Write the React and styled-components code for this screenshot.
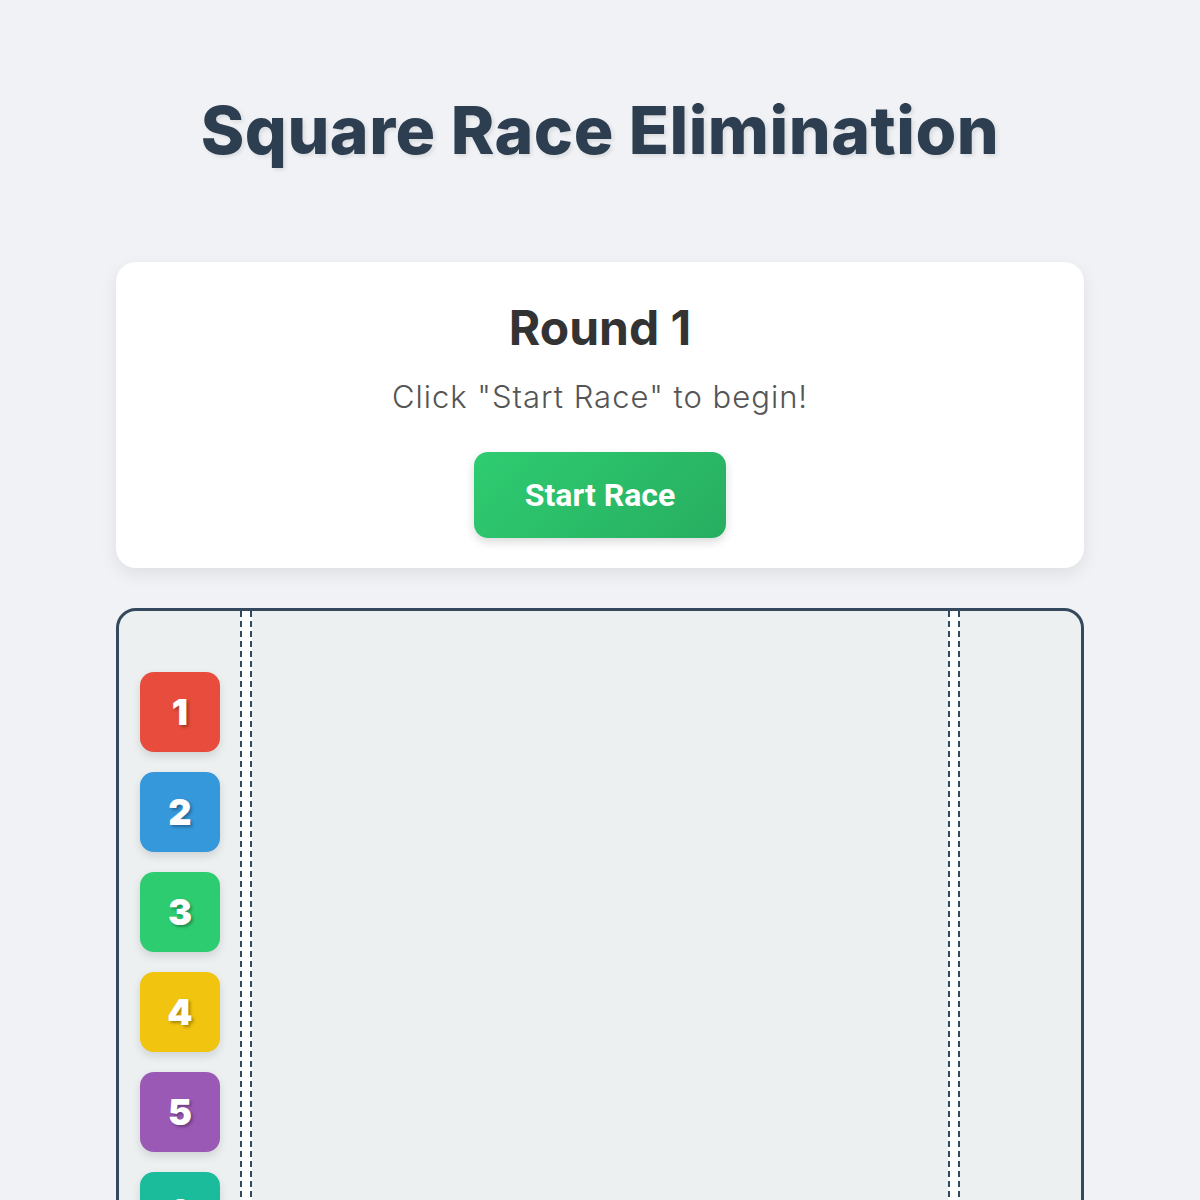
import React from "react";
import styled, { createGlobalStyle } from "styled-components";

const GlobalStyle = createGlobalStyle`
  body {
    margin: 0;
    background-color: #f0f2f5;
    font-family: "Inter", "Noto Sans", sans-serif;
  }
`;

const Page = styled.div`
  width: 968px;
  margin: 0 auto;
  padding-top: 91px;
`;

const Title = styled.h1`
  margin: 0 0 92px 0;
  text-align: center;
  font-size: 66px;
  font-weight: 800;
  line-height: 1.2;
  letter-spacing: 0.5px;
  color: #2c3e50;
  text-shadow: 2px 2px 4px rgba(0, 0, 0, 0.1);
`;

const Panel = styled.div`
  background: #ffffff;
  border-radius: 20px;
  box-shadow: 0 6px 18px rgba(0, 0, 0, 0.08);
  padding: 37px 20px 30px;

  display: flex;
  flex-direction: column;
  align-items: center;
`;

const RoundLabel = styled.h2`
  margin: 0;
  font-size: 48px;
  font-weight: 700;
  line-height: 1.2;
  color: #333333;
`;

const Status = styled.p`
  margin: 20px 0 35px 0;
  font-size: 31px;
  font-weight: 300;
  line-height: 1.3;
  letter-spacing: 1px;
  color: #555555;
`;

const StartButton = styled.button`
  width: 252px;
  height: 86px;
  border: none;
  border-radius: 14px;
  background: linear-gradient(135deg, #2ecc71, #27ae60);
  box-shadow: 0 4px 10px rgba(0, 0, 0, 0.15);
  color: #ffffff;
  font-family: "Roboto", sans-serif;
  font-size: 32px;
  font-weight: 700;
  cursor: pointer;
`;

const Track = styled.div`
  position: relative;
  margin-top: 40px;
  height: 900px;
  background: #ecf0f1;
  border: 3px solid #34495e;
  border-radius: 20px;
  padding: 61px 21px;
`;

// start / finish markers drawn over the lanes
const Line = styled.div`
  position: absolute;
  top: 0;
  bottom: 0;
  width: 12px;
  ${(p) => (p.finish ? "right: 121px;" : "left: 121px;")}
  background:
    repeating-linear-gradient(to bottom, #34495e 0 6px, transparent 6px 10px) left / 2px 100% no-repeat,
    repeating-linear-gradient(to bottom, #34495e 0 6px, transparent 6px 10px) right / 2px 100% no-repeat,
    rgba(255, 255, 255, 0.9);
`;

const Lanes = styled.div`
  display: flex;
  flex-direction: column;
  gap: 20px;
`;

const Racer = styled.div`
  width: 80px;
  height: 80px;
  border-radius: 14px;
  background: ${(p) => p.color};
  box-shadow: 0 4px 8px rgba(0, 0, 0, 0.12);

  display: flex;
  align-items: center;
  justify-content: center;

  color: #ffffff;
  font-size: 36px;
  font-weight: 900;
  text-shadow: 2px 2px 3px rgba(0, 0, 0, 0.3);
`;

const racers = [
  { id: 1, color: "#e74c3c" },
  { id: 2, color: "#3498db" },
  { id: 3, color: "#2ecc71" },
  { id: 4, color: "#f1c40f" },
  { id: 5, color: "#9b59b6" },
  { id: 6, color: "#1abc9c" },
  { id: 7, color: "#e67e22" },
  { id: 8, color: "#34495e" },
];

const App = () => {
  return (
    <>
      <GlobalStyle />
      <Page>
        <Title>Square Race Elimination</Title>

        <Panel>
          <RoundLabel>Round 1</RoundLabel>
          <Status>Click "Start Race" to begin!</Status>
          <StartButton>Start Race</StartButton>
        </Panel>

        <Track>
          <Line />
          <Line finish />
          <Lanes>
            {racers.map((r) => (
              <Racer key={r.id} color={r.color}>
                {r.id}
              </Racer>
            ))}
          </Lanes>
        </Track>
      </Page>
    </>
  );
};

export default App;
